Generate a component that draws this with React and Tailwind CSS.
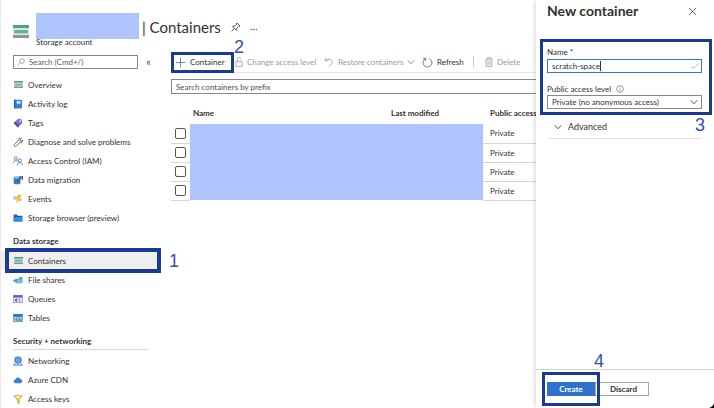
import React from "react";

const Store = ({ className = "w-[9px] h-[9px]" }) => (
  <svg viewBox="0 0 16 13" preserveAspectRatio="none" className={className} aria-hidden="true">
    <rect width="16" height="3.4" fill="#53a08b" />
    <rect y="3.4" width="16" height="9.6" fill="#e4e8e8" />
    <rect x="1.2" y="5" width="13.6" height="3.4" fill="#62b39c" />
    <rect y="10" width="16" height="3" fill="#8c9696" />
  </svg>
);

const Glyph = ({ children }) => (
  <svg viewBox="0 0 16 16" className="w-[10px] h-[10px] shrink-0" fill="none" aria-hidden="true">
    {children}
  </svg>
);

const icons = {
  overview: <Store className="w-[9px] h-[7px] shrink-0" />,
  log: (
    <Glyph>
      <rect x="1.5" y="1" width="13" height="14" rx="1.5" fill="#3b82d6" />
      <rect x="1.5" y="1" width="2.5" height="14" fill="#2464b4" />
      <rect x="6" y="3.5" width="6" height="4" fill="#dcebfb" />
    </Glyph>
  ),
  tags: (
    <Glyph>
      <path d="M1 8 8.500 1 14 2.500 15 8 8 15Z" fill="#8268cf" />
      <path d="M1 8 8 15l2-2L3.500 6Z" fill="#5a429f" />
      <circle cx="11.500" cy="5" r="1.300" fill="#fff" />
    </Glyph>
  ),
  diagnose: (
    <Glyph>
      <path d="M13.500 2.200 11 4.700l.6 1.800 1.800.4 1.900-2.100c.5 2.700-1.700 4.900-4.400 4.300L5 14.500c-1.800 1.600-4.200-.6-2.700-2.600L8 6.200C7.100 3.200 10 .8 13.500 2.200Z" stroke="#555" strokeWidth="1.400" />
    </Glyph>
  ),
  iam: (
    <Glyph>
      <g stroke="#4c7fcf" strokeWidth="1.400">
        <circle cx="4.500" cy="3.800" r="2.500" />
        <path d="M.8 11c0-5 7.400-5 7.400-1" />
        <circle cx="11" cy="7.300" r="2.500" />
        <path d="M6.800 15c0-6 8.400-6 8.400 0" />
      </g>
    </Glyph>
  ),
  migration: (
    <Glyph>
      <path d="M1 4h11v9.500c-3 1.800-8 1.800-11 0Z" fill="#3d79b8" />
      <ellipse cx="6.500" cy="4" rx="5.500" ry="2" fill="#76b6e4" />
      <path d="m7 10 6-6M10 3h5v5" stroke="#3e566e" strokeWidth="2" />
    </Glyph>
  ),
  events: (
    <Glyph>
      <path d="M8 1h6l-3 4.500h3L4.500 15l2-6.500H3.500Z" fill="#f2c230" />
      <path d="M1 5h4M1 8h3M10 12l4-4" stroke="#4a93c4" strokeWidth="1.500" />
    </Glyph>
  ),
  browser: (
    <Glyph>
      <path d="M1 2.500h5l1.500 2H15v9H1Z" fill="#1e55a5" />
      <path d="M1 13.500V8l5-1.500h9v7Z" fill="#3f8fe0" />
    </Glyph>
  ),
  files: (
    <Glyph>
      <path d="M4 6h5l1.500-3H15v10H4Z" fill="#4d9fc9" />
      <path d="M6 7h9v6H6Z" fill="#76c5de" />
      <path d="M0 9h6M3 6.500v5" stroke="#4b89ac" strokeWidth="1.500" />
    </Glyph>
  ),
  queues: (
    <Glyph>
      <rect x="1" y="2" width="14" height="12" fill="#e3daf4" stroke="#8b78bd" />
      <rect x="1" y="2" width="14" height="3.500" fill="#6c55a8" />
      <path d="M5.500 6v8M10.500 6v8" stroke="#8b78bd" />
      <rect x="3" y="8" width="4" height="3.500" fill="#765fb5" />
    </Glyph>
  ),
  tables: (
    <Glyph>
      <rect x="1" y="2" width="14" height="12" fill="#a7cfe8" stroke="#5583bb" />
      <rect x="1" y="2" width="14" height="4" fill="#3568b0" />
      <path d="M1 10h14M5.500 6v8M10.500 6v8" stroke="#5583bb" />
      <rect x="6" y="10.500" width="8.500" height="3" fill="#78a88c" />
    </Glyph>
  ),
  network: (
    <Glyph>
      <circle cx="8" cy="6.500" r="5.500" fill="#8cc6ee" stroke="#2f77c2" strokeWidth="1.300" />
      <path d="M3 4.500h10M3 8.500h10M8 1v10M5 2c-1 3-1 6 0 9M11 2c1 3 1 6 0 9" stroke="#2f77c2" />
      <path d="M1 14.500h14M3 12l-2 2.500M13 12l2 2.500" stroke="#2f77c2" strokeWidth="1.600" />
    </Glyph>
  ),
  cdn: (
    <Glyph>
      <path d="M4 13a3 3 0 0 1-.3-6 4.500 4.500 0 0 1 8.500-.3A3.200 3.200 0 0 1 12.500 13Z" fill="#3c7fd2" />
    </Glyph>
  ),
  keys: (
    <Glyph>
      <path d="M8 7v8M8 11h3M8 14h3" stroke="#cfa52a" strokeWidth="2" />
      <circle cx="8" cy="5" r="3.300" stroke="#e8bf38" strokeWidth="2.200" />
      <path d="M1 3.500h3M12 3.500h3" stroke="#76a65a" strokeWidth="2" />
    </Glyph>
  ),
};

const groups = [
  {
    items: [
      ["Overview", "overview"],
      ["Activity log", "log"],
      ["Tags", "tags"],
      ["Diagnose and solve problems", "diagnose"],
      ["Access Control (IAM)", "iam"],
      ["Data migration", "migration"],
      ["Events", "events"],
      ["Storage browser (preview)", "browser"],
    ],
  },
  {
    title: "Data storage",
    items: [
      ["Containers", "overview"],
      ["File shares", "files"],
      ["Queues", "queues"],
      ["Tables", "tables"],
    ],
  },
  {
    title: "Security + networking",
    items: [
      ["Networking", "network"],
      ["Azure CDN", "cdn"],
      ["Access keys", "keys"],
    ],
  },
];

const Line = ({ children, className = "w-[10px] h-[10px]" }) => (
  <svg viewBox="0 0 16 16" className={`${className} shrink-0`} fill="none" stroke="currentColor" strokeWidth="1.300" aria-hidden="true">
    {children}
  </svg>
);

const Chevron = () => (
  <Line className="w-[8px] h-[8px]">
    <path d="m1.500 4.500 6.500 7 6.500-7" strokeWidth="1.700" />
  </Line>
);

// Numbered call-outs drawn over the page
const Frame = ({ className }) => (
  <span className={`pointer-events-none absolute border-[#1a3a94] ${className}`} aria-hidden="true" />
);
const Step = ({ className, children }) => (
  <span className={`pointer-events-none absolute font-['Liberation_Sans',sans-serif] text-[18px] font-normal leading-[20px] text-[#2c51b8] ${className}`}>
    {children}
  </span>
);

function SideNav() {
  return (
    <nav className="w-[171px] shrink-0 pr-[22px] pl-[13px]">
      <div className="flex items-center gap-2">
        <label className="flex h-[14px] w-[125px] shrink-0 items-center gap-1 border border-[#8a8886] pl-[3px]">
          <Line className="w-[8px] h-[8px] text-[#777]">
            <circle cx="10" cy="6" r="4.500" />
            <path d="m6.500 9.500-5 5" />
          </Line>
          <input
            aria-label="Search menu"
            placeholder="Search (Cmd+/)"
            className="w-full min-w-0 bg-transparent outline-none placeholder:text-[#605e5c]"
          />
        </label>
        <button aria-label="Collapse menu" className="text-[12px] leading-[12px] text-[#666]">«</button>
      </div>
      <div className="mt-[6px]">
        {groups.map((g, i) => (
          <section key={i}>
            {g.title && (
              <h2 className="h-6 pt-2 font-bold leading-[12px]">
                <span className="block h-[15px] border-b border-[#d8d8d8]">{g.title}</span>
              </h2>
            )}
            <ul>
              {g.items.map(([label, icon]) => {
                const active = label === "Containers";
                return (
                  <li key={label} className={active ? "relative -ml-[13px] -mr-[11px] bg-[#efefef] pl-[13px]" : ""}>
                    <a href="#" className="flex h-[19px] items-center gap-[5px] whitespace-nowrap">
                      <span className="flex w-[10px] justify-center">{icons[icon]}</span>
                      {label}
                    </a>
                    {active && (
                      <>
                        <Frame className="-top-[3px] -bottom-[3px] left-[5px] -right-[1px] border-4" />
                        <Step className="-right-[19px] top-0">1</Step>
                      </>
                    )}
                  </li>
                );
              })}
            </ul>
          </section>
        ))}
      </div>
    </nav>
  );
}

function Toolbar() {
  return (
    <div className="flex h-[21px] items-center whitespace-nowrap border-b border-[#e6e6e6] text-[#9a9a9a]">
      <button className="relative flex h-[21px] w-[63px] shrink-0 items-center gap-1 pl-1 text-[#323130]">
        <Line className="w-[11px] h-[11px] text-[#4d7bc9]"><path d="M8 1v14M1 8h14" /></Line>
        Container
        <Frame className="inset-0 border-[3px]" />
        <Step className="left-[63px] -top-[15px]">2</Step>
      </button>
      <button className="flex w-[90px] shrink-0 items-center gap-[3px]">
        <Line><path d="M3 7h10v8H3ZM5 7V4c0-4 6-4 6 0" /></Line>
        Change access level
      </button>
      <button className="flex w-[98px] shrink-0 items-center gap-1">
        <Line><path d="M2 1.500v4.500h5M2 6c7-6 14 0 10.500 4.500L8 15" /></Line>
        Restore containers
        <span className="ml-auto mr-2 text-[#777]"><Chevron /></span>
      </button>
      <button className="flex w-[51px] shrink-0 items-center gap-1 text-[#323130]">
        <Line className="w-[11px] h-[11px] text-[#4d6fa8]">
          <path d="M11 2.500a6.400 6.400 0 1 1-6 0M1.500 2h4v4" />
        </Line>
        Refresh
      </button>
      <span className="mr-[10px] h-[12px] w-px shrink-0 bg-[#cfcfcf]" />
      <button className="flex shrink-0 items-center gap-[3px]">
        <Line><path d="M2 3.500h12M5.500 3V1h5v2M3.500 4v11h9V4M6.500 6v6.500M9.500 6v6.500" /></Line>
        Delete
      </button>
    </div>
  );
}

function ContainerTable() {
  return (
    <table className="mt-[8px] w-full table-fixed border-collapse whitespace-nowrap text-left">
      <colgroup>
        <col className="w-[19px]" />
        <col className="w-[198px]" />
        <col className="w-[95px]" />
        <col />
      </colgroup>
      <thead>
        <tr className="h-[22px]">
          <td />
          <th scope="col" className="p-0 pl-[3px] font-bold">Name</th>
          <th scope="col" className="p-0 pl-[3px] font-bold">Last modified</th>
          <th scope="col" className="p-0 pl-[7px] font-bold">Public access</th>
        </tr>
      </thead>
      <tbody>
        {[1, 2, 3, 4].map((n) => (
          <tr key={n} className="h-[19px]">
            <td className="border-b border-[#d6d6d6] p-0 pl-1">
              <input
                type="checkbox"
                aria-label={`Select container ${n}`}
                className="block h-[11px] w-[11px] appearance-none rounded-[2px] border border-[#555]"
              />
            </td>
            {n === 1 && <td rowSpan={4} colSpan={2} className="bg-[#afc4fd] p-0" />}
            <td className="border-b border-[#d6d6d6] p-0 pl-[7px]">Private</td>
          </tr>
        ))}
      </tbody>
    </table>
  );
}

function NewContainer() {
  return (
    <aside className="relative flex w-[178px] shrink-0 flex-col bg-white shadow-[0_0_5px_rgba(0,0,0,0.22)]">
      <header className="flex h-[22px] items-center justify-between pr-[17px] pl-[11px]">
        <h2 className="whitespace-nowrap text-[14px] font-bold leading-[20px]">New container</h2>
        <button aria-label="Close"><Line className="w-[9px] h-[9px]"><path d="m1.500 1.500 13 13M14.500 1.500l-13 13" /></Line></button>
      </header>
      <form className="flex flex-1 flex-col">
        <div className="relative mt-[17px] mr-[2px] ml-[4px] h-[76px] border-[3px] border-[#1a3a94] pt-1 pr-[7px] pl-1">
          <label htmlFor="name" className="block h-[13px] leading-[12px]">Name *</label>
          <div className="flex h-[14px] items-center border border-[#3f74c0] pr-[2px] pl-1">
            <input id="name" defaultValue="scratch-space" className="w-[48px] min-w-0 bg-transparent outline-none" />
            <span className="h-[10px] w-px bg-[#333]" />
            <span className="ml-auto text-[#8c9c78]"><Line className="w-[8px] h-[8px]"><path d="m1 9 4 4L15 3" /></Line></span>
          </div>
          <div className="mt-[9px] flex h-[13px] items-center gap-[5px] leading-[12px]">
            <label htmlFor="level">Public access level</label>
            <Line className="w-[8px] h-[8px] text-[#666]"><circle cx="8" cy="8" r="6.800" /><path d="M8 7v5M8 4v1.500" /></Line>
          </div>
          <div className="relative">
            <select id="level" className="block h-[14px] w-full appearance-none border border-[#8a8886] pl-1 leading-[12px] outline-none">
              <option>Private (no anonymous access)</option>
            </select>
            <span className="pointer-events-none absolute top-[3px] right-1"><Chevron /></span>
          </div>
          <Step className="right-[4px] top-[73px]">3</Step>
        </div>
        <button type="button" className="mr-[12px] ml-[13px] flex h-[24px] items-center gap-[6px] border-b border-[#e2e2e2] pl-[5px] text-[9px]">
          <Chevron />
          Advanced
        </button>
        <footer className="relative mt-auto flex h-[39px] items-start border-t border-[#d0d0d0] pt-[12px] pl-[11px] font-bold">
          <button type="submit" className="h-[14px] w-[48px] bg-[#2f72cc] text-white">Create</button>
          <button type="button" className="h-[14px] w-[54px] border border-[#a5a5a5] pl-[3px]">Discard</button>
          <Frame className="left-[6px] top-[2px] h-[34px] w-[58px] border-[3px]" />
          <Step className="left-[58px] -top-[19px]">4</Step>
          <svg viewBox="0 0 5 5" className="absolute right-0 bottom-0 h-[5px] w-[5px]" aria-hidden="true"><path d="M5 0v5H0Q4 4 5 0Z" fill="#000" /></svg>
        </footer>
      </form>
    </aside>
  );
}

export default function App() {
  return (
    <div className="flex min-h-screen overflow-hidden bg-white font-['Lato','Open_Sans',sans-serif] text-[8px] leading-[12px] text-[#323130]">
      <main className="min-w-0 flex-1 overflow-hidden border-l border-[#e8e8e8]">
        <header className="-ml-px flex h-[55px] items-start pt-[13px] pl-[13px]">
          <span className="mt-[12px] mr-[7px]"><Store className="w-[16px] h-[13px]" /></span>
          <div className="relative w-[103px]">
            <p className="pt-[23px]">Storage account</p>
            <div className="absolute inset-x-0 top-0 h-[26px] bg-[#afc4fd]" />
          </div>
          <h1 className="ml-[3px] whitespace-nowrap text-[15px] leading-[28px]">| Containers</h1>
          <button aria-label="Pin" className="mt-[9px] ml-[10px]">
            <Line><path d="m9.500 1.500 5 5-2 .5-3 3-.5 3.500-6.500-6.500L6 6.500l3-3ZM5.500 10.500l-4.500 4.500" /></Line>
          </button>
          <button aria-label="More" className="mt-[7px] ml-[9px] text-[10px]">…</button>
        </header>
        <div className="-ml-px flex">
          <SideNav />
          <div className="-mt-[3px] min-w-0 flex-1">
            <Toolbar />
            <input
              aria-label="Search containers by prefix"
              placeholder="Search containers by prefix"
              className="mt-[6px] block h-[15px] w-full border border-r-0 border-[#8a8886] pl-1 outline-none placeholder:text-[#505050]"
            />
            <ContainerTable />
          </div>
        </div>
      </main>
      <NewContainer />
    </div>
  );
}
